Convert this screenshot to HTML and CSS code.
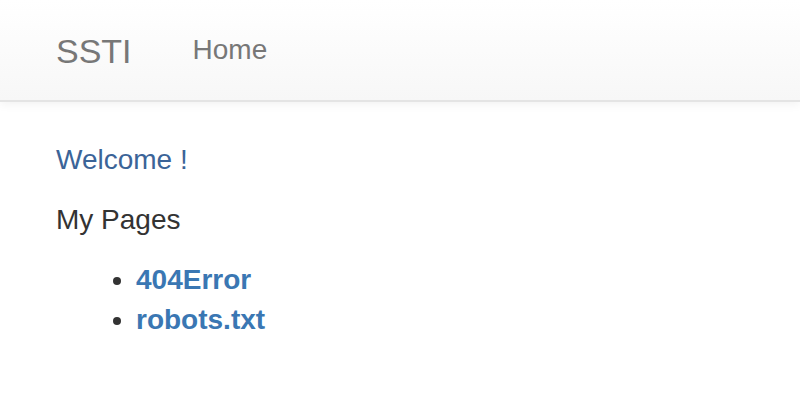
FILE: index.html
```html
<!DOCTYPE html>
<html>
<head>
<meta charset="utf-8">
<link rel="stylesheet" href="styles.css">
</head>
<body>
<nav class="navbar">
  <a class="brand" href="#">SSTI</a>
  <a class="nav-link" href="#">Home</a>
</nav>
<main class="content">
  <p class="welcome">Welcome !</p>
  <p class="heading">My Pages</p>
  <ul class="pages">
    <li><a href="#">404Error</a></li>
    <li><a href="#">robots.txt</a></li>
  </ul>
</main>
</body>
</html>
```
FILE: styles.css
```css
html, body {
  margin: 0;
  padding: 0;
  background: #fff;
}
body {
  font-family: "Liberation Sans", Arial, sans-serif;
  font-size: 28px;
  line-height: 40px;
  color: #333;
}
.navbar {
  height: 100px;
  display: flex;
  align-items: center;
  padding-left: 56px;
  background: linear-gradient(to bottom, #ffffff 0%, #f7f7f7 100%);
  border-bottom: 2px solid #e4e4e4;
  box-shadow: 0 2px 10px rgba(0, 0, 0, 0.06);
  margin-bottom: 38px;
}
.navbar a {
  text-decoration: none;
  color: #777;
}
.brand {
  font-size: 34px;
  margin-right: 61px;
  padding-top: 2px;
}
.nav-link {
  font-size: 28px;
}
.content {
  padding-left: 56px;
}
.content p {
  margin: 0 0 20px;
}
.welcome {
  color: #3b6498;
}
.pages {
  margin: 0;
  padding-left: 80px;
}
.pages a {
  color: #3a77b3;
  font-weight: bold;
  text-decoration: none;
}
```
